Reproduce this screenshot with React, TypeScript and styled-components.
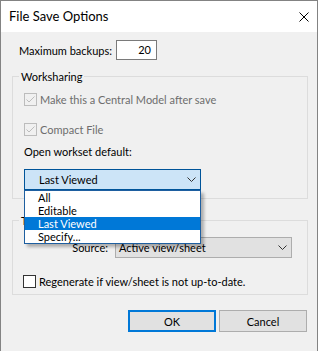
import React from 'react';
import styled, { createGlobalStyle } from 'styled-components';

const GlobalStyle = createGlobalStyle`
  html, body {
    margin: 0;
    padding: 0;
    background: #ffffff;
  }
  body {
    font-family: Lato, "Segoe UI", sans-serif;
    font-size: 11px;
    color: #000000;
  }
`;

const Dialog = styled.div`
  width: 318px;
  height: 360px;
  box-sizing: border-box;
  border: 1px solid #838383;
  border-bottom: none;
  background: #f0f0f0;
  display: flex;
  flex-direction: column;
`;

const TitleBar = styled.div`
  height: 31px;
  background: #ffffff;
  display: flex;
  align-items: center;
  justify-content: space-between;
  padding-left: 8px;
`;

const Title = styled.span`
  font-size: 13px;
  line-height: 15px;
`;

const CloseButton = styled.div`
  width: 10px;
  height: 10px;
  margin-right: 8px;
  display: flex;
`;

const Body = styled.div`
  display: flex;
  flex-direction: column;
  padding-top: 8px;
`;

const BackupsRow = styled.div`
  display: flex;
  align-items: center;
  padding-left: 18px;
  height: 20px;
`;

const Label = styled.span<{ $width?: number; $right?: boolean }>`
  line-height: 15px;
  white-space: nowrap;
  width: ${p => (p.$width ? `${p.$width}px` : 'auto')};
  text-align: ${p => (p.$right ? 'right' : 'left')};
  padding-right: ${p => (p.$right ? '7px' : '0')};
  box-sizing: border-box;
`;

const NumberBox = styled.div`
  width: 41px;
  height: 20px;
  box-sizing: border-box;
  border: 1px solid #7a7a7a;
  background: #ffffff;
  text-align: right;
  padding-right: 5px;
  line-height: 18px;
`;

const Group = styled.fieldset<{ $top: number }>`
  margin: ${p => p.$top}px 0 0 11px;
  width: 296px;
  box-sizing: border-box;
  border: 1px solid #dcdcdc;
  padding: 0;
  min-width: 0;
`;

const Legend = styled.legend`
  margin-left: 6px;
  padding: 0 2px;
  line-height: 15px;
`;

const GroupContent = styled.div<{ $padTop: number; $padBottom: number; $padLeft: number }>`
  display: flex;
  flex-direction: column;
  padding: ${p => p.$padTop}px 0 ${p => p.$padBottom}px ${p => p.$padLeft}px;
`;

const CheckRow = styled.div<{ $gap?: number }>`
  display: flex;
  align-items: center;
  height: 15px;
  margin-top: ${p => p.$gap ?? 0}px;
`;

const Box = styled.span<{ $disabled?: boolean }>`
  width: 13px;
  height: 13px;
  box-sizing: border-box;
  border: 1px solid ${p => (p.$disabled ? '#bcbcbc' : '#333333')};
  background: ${p => (p.$disabled ? 'transparent' : '#ffffff')};
  margin-right: 3px;
  display: flex;
  flex-shrink: 0;
`;

const CheckText = styled.span<{ $disabled?: boolean }>`
  line-height: 15px;
  white-space: nowrap;
  color: ${p => (p.$disabled ? '#6d6d6d' : '#000000')};
`;

const FieldLabel = styled.div`
  line-height: 15px;
  margin-top: 7px;
`;

const ComboWrap = styled.div`
  position: relative;
  margin-top: 10px;
  width: 177px;
  z-index: 5;
`;

const Combo = styled.div<{ $open?: boolean; $width: number }>`
  width: ${p => p.$width}px;
  height: 21px;
  box-sizing: border-box;
  border: 1px solid ${p => (p.$open ? '#005499' : '#adadad')};
  background: ${p => (p.$open ? '#cce4f7' : '#e1e1e1')};
  display: flex;
  align-items: center;
  justify-content: space-between;
  padding: 0 4px 0 ${p => (p.$open ? 14 : 3)}px;
  line-height: 15px;
  white-space: nowrap;
`;

const DropList = styled.div`
  position: absolute;
  left: 0;
  top: 21px;
  width: 177px;
  box-sizing: border-box;
  border: 1px solid #1e5fa0;
  background: #ffffff;
  box-shadow: 3px 3px 3px rgba(0, 0, 0, 0.28);
`;

const DropItem = styled.div<{ $selected?: boolean }>`
  height: 13px;
  line-height: 13px;
  padding-left: 13px;
  background: ${p => (p.$selected ? '#0078d7' : '#ffffff')};
  color: ${p => (p.$selected ? '#ffffff' : '#000000')};
`;

const SourceRow = styled.div`
  display: flex;
  align-items: center;
  height: 21px;
`;

const ButtonRow = styled.div`
  display: flex;
  justify-content: flex-end;
  gap: 3px;
  margin-top: 15px;
  padding-right: 10px;
`;

const Button = styled.div<{ $default?: boolean }>`
  width: 88px;
  height: 22px;
  box-sizing: border-box;
  border: ${p => (p.$default ? '2px solid #0078d7' : '1px solid #adadad')};
  background: #e1e1e1;
  display: flex;
  align-items: center;
  justify-content: center;
  line-height: 15px;
`;

const Chevron = ({ color = '#333333' }: { color?: string }) => (
  <svg width="9" height="5" viewBox="0 0 9 5">
    <polyline points="0.5,0.5 4.5,4.5 8.5,0.5" fill="none" stroke={color} strokeWidth="1" />
  </svg>
);

const Check = ({ label, disabled, checked, gap }: { label: string; disabled?: boolean; checked?: boolean; gap?: number }) => (
  <CheckRow $gap={gap}>
    <Box $disabled={disabled}>
      {checked && (
        <svg width="11" height="11" viewBox="0 0 11 11">
          <polyline points="1.5,5.5 4,8 9.5,2.5" fill="none" stroke="#bcbcbc" strokeWidth="1" />
        </svg>
      )}
    </Box>
    <CheckText $disabled={disabled}>{label}</CheckText>
  </CheckRow>
);

const worksetOptions = ['All', 'Editable', 'Last Viewed', 'Specify...'];

export default function App() {
  return (
    <>
      <GlobalStyle />
      <Dialog>
        <TitleBar>
          <Title>File Save Options</Title>
          <CloseButton>
            <svg width="10" height="10" viewBox="0 0 10 10">
              <path d="M0.5 0.5 L9.5 9.5 M9.5 0.5 L0.5 9.5" stroke="#000" strokeWidth="1" />
            </svg>
          </CloseButton>
        </TitleBar>
        <Body>
          <BackupsRow>
            <Label $width={97}>Maximum backups:</Label>
            <NumberBox>20</NumberBox>
          </BackupsRow>

          <Group $top={9}>
            <Legend>Worksharing</Legend>
            <GroupContent $padTop={8} $padBottom={8} $padLeft={11}>
              <Check label="Make this a Central Model after save" disabled checked />
              <Check label="Compact File" disabled checked gap={15} />
              <FieldLabel>Open workset default:</FieldLabel>
              <ComboWrap>
                <Combo $open $width={177}>
                  <span>Last Viewed</span>
                  <Chevron />
                </Combo>
                <DropList>
                  {worksetOptions.map(o => (
                    <DropItem key={o} $selected={o === 'Last Viewed'}>
                      {o}
                    </DropItem>
                  ))}
                </DropList>
              </ComboWrap>
            </GroupContent>
          </Group>

          <Group $top={14}>
            <Legend>Thumbnail Preview</Legend>
            <GroupContent $padTop={9} $padBottom={5} $padLeft={10}>
              <SourceRow>
                <Label $width={92} $right>Source:</Label>
                <Combo $width={177}>
                  <span>Active view/sheet</span>
                  <Chevron />
                </Combo>
              </SourceRow>
              <Check label="Regenerate if view/sheet is not up-to-date." gap={16} />
            </GroupContent>
          </Group>

          <ButtonRow>
            <Button $default>OK</Button>
            <Button>Cancel</Button>
          </ButtonRow>
        </Body>
      </Dialog>
    </>
  );
}
